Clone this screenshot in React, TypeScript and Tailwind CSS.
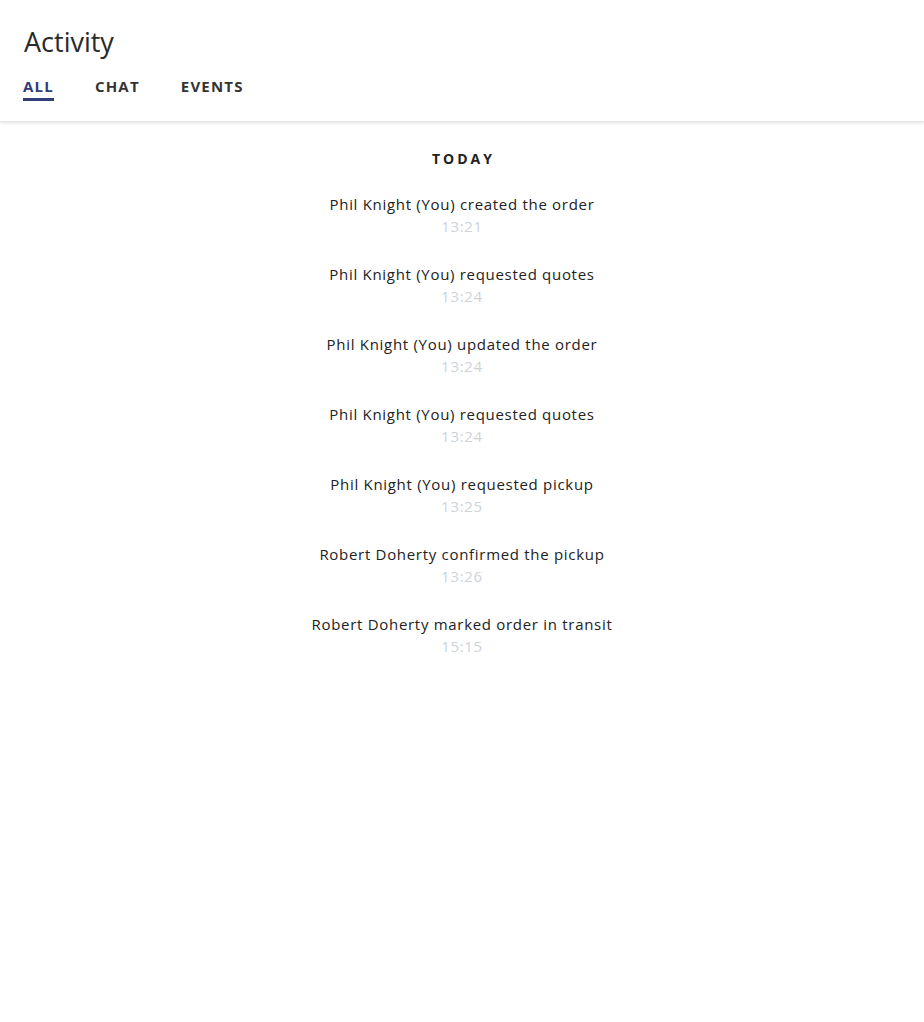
import { useState } from 'react';

const events = [
    { text: 'Phil Knight (You) created the order', time: '13:21' },
    { text: 'Phil Knight (You) requested quotes', time: '13:24' },
    { text: 'Phil Knight (You) updated the order', time: '13:24' },
    { text: 'Phil Knight (You) requested quotes', time: '13:24' },
    { text: 'Phil Knight (You) requested pickup', time: '13:25' },
    { text: 'Robert Doherty confirmed the pickup', time: '13:26' },
    { text: 'Robert Doherty marked order in transit', time: '15:15' },
];

const tabs = ['ALL', 'CHAT', 'EVENTS'];

export default function App() {
    const [activeTab, setActiveTab] = useState('ALL');

    return (
        <div className="min-h-screen bg-white font-['Open_Sans',sans-serif] text-[#222]">
            {/* Header */}
            <div className="px-6 pt-[25px] pb-[20px] shadow-[0_1px_3px_rgba(0,0,0,0.12)] border-b border-[#e6e6e6]">
                <h1 className="text-[27px] leading-[34px] text-[#2a2a2a]">Activity</h1>
                <div className="flex gap-[41px] mt-[17px] -ml-[1px]">
                    {tabs.map((tab) => (
                        <button
                            key={tab}
                            onClick={() => setActiveTab(tab)}
                            className={`pb-[2px] text-[15px] font-bold leading-[20px] tracking-[1.2px] border-b-[3px] ${
                                activeTab === tab
                                    ? 'text-[#2f3d7a] border-[#2f3d7a]'
                                    : 'text-[#333] border-transparent'
                            }`}
                        >
                            {tab}
                        </button>
                    ))}
                </div>
            </div>

            {/* Feed */}
            <div className="flex flex-col items-center pt-[27px]">
                <div className="text-[14px] font-bold tracking-[3px] leading-[20px] text-[#222] pl-[3px]">TODAY</div>
                <div className="flex flex-col items-center mt-[24px] gap-[25px]">
                    {events.map((ev, i) => (
                        <div key={i} className="flex flex-col items-center">
                            <div className="text-[15px] leading-[23px] tracking-[0.7px] text-[#222]">{ev.text}</div>
                            <div className="text-[15px] leading-[24px] tracking-[0.7px] text-[#cdd3d9] -mt-[2px]">{ev.time}</div>
                        </div>
                    ))}
                </div>
            </div>
        </div>
    );
}
